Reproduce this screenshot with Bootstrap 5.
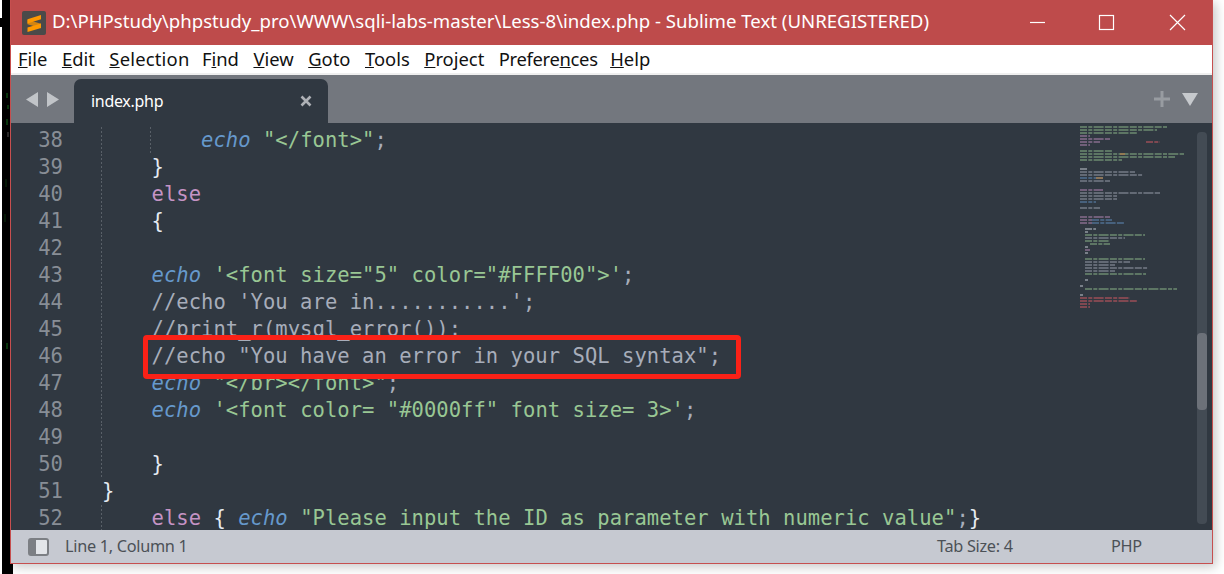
<!DOCTYPE html>
<html lang="en">
<head>
<meta charset="utf-8">
<title>Sublime Text</title>
<link href="https://cdn.jsdelivr.net/npm/bootstrap@5.3.0/dist/css/bootstrap.min.css" rel="stylesheet">
<style>
html,body{width:1224px;height:574px;overflow:hidden;background:#fff;font-family:"Noto Sans","Open Sans",sans-serif}
.desk-strip{width:8px;margin-left:2px;background:#000;height:574px;flex:none}
.desk-nub{width:10px;height:9px;margin-left:-2px;background:#000;position:relative;top:18px}
.desk-marks{display:block;margin-top:40px}
.win-col{width:1203px;flex:none}
.win{height:564px;border:1px solid #c64f4f;border-top:0;box-shadow:3px 3px 10px rgba(0,0,0,.22);position:relative;background:#303841}
.title-bar{height:45px;background:#be4b4b;color:#fff;font-size:18.63px;padding-left:11px}
.title-text{margin-top:-4px}
.app-logo{margin-right:6px;flex:none}
.win-ctl{width:72px;height:45px}
.menu-bar{height:30px;background:#fff;border-bottom:2px solid #efefef;color:#111;font-size:18.4px;padding-left:7px;line-height:28px}
.menu-bar span{margin-right:14.5px}
.menu-bar .narrow-item{letter-spacing:-.33px;margin-right:12.5px}
.menu-bar .wide-item{letter-spacing:.2px;margin-right:12.5px}
.tab-bar{height:48px;background:#73777e;padding-left:15px}
.tab-nav{width:48px;height:48px}
.file-tab{width:254px;height:44px;margin-top:4px;background:#303841;border-radius:7px 7px 0 0;color:#fff;font-size:16px;letter-spacing:-.3px;padding:0 16px 0 17px}
.tab-tools{margin-left:auto;margin-right:14px;gap:12px}
.editor{height:407px;background:#303841;overflow:hidden}
.gutter{width:89px;flex:none;padding-top:4px;padding-right:37px;text-align:right;color:#888e96;white-space:pre}
.code-font{font-family:"DejaVu Sans Mono","Liberation Mono",monospace;font-size:20.5px;letter-spacing:.04px;line-height:27px}
.code-area{width:971px;flex:none;padding-top:4px;color:#e6ebf2}
.cl{height:27px;padding-left:2px;white-space:pre}
.g1{background:linear-gradient(#596068 50%,transparent 50%) 1px 0/1px 4px repeat-y}
.g2{background:linear-gradient(#596068 50%,transparent 50%) 1px 0/1px 4px repeat-y,linear-gradient(#596068 50%,transparent 50%) 50px 0/1px 4px repeat-y}
.t-kw{color:#c594c5}
.t-ec{color:#6699cc;font-style:italic}
.t-st{color:#99c794}
.t-cm{color:#a7adba}
.t-pu{color:#a7adba}
.mini-map{width:118px;flex:none;filter:blur(.5px)}
.scroll-track{width:10px;height:392px;margin:9px 0 0 8px;background:#434b54;border-radius:4px;padding-top:201px;flex:none}
.scroll-thumb{height:77px;background:#6c7179;border-radius:4px}
.status-bar{height:33px;background:#c6c9d1;color:#4c5157;font-size:16.3px;letter-spacing:-.3px;padding-left:17px}
.st-right-tab{margin-left:auto;width:174px}
.st-right-lang{width:101px}
.red-box{position:absolute;left:132px;top:335px;width:598px;height:44px;border:5px solid #fb2117;border-radius:4px}
.under-win{width:3px;height:10px;background:#000}
</style>
</head>
<body class="d-flex m-0">
<div class="desk-strip">
  <div class="desk-nub"></div>
  <svg class="desk-marks" width="8" height="300" viewBox="0 0 8 300" aria-hidden="true"><path d="M5 44v5M6 56v4M5 70v6" stroke="#0d4a12" stroke-width="1.5"/><path d="M6 83v5" stroke="#3a3a3a" stroke-width="1.5"/><path d="M4 130v8M3 165v8" stroke="#0a300d" stroke-width="1"/><path d="M5 294v6" stroke="#0d4a12" stroke-width="1.5"/></svg>
</div>
<div class="win-col">
  <div class="win d-flex flex-column">
    <div class="title-bar d-flex align-items-center">
      <svg class="app-logo" width="24" height="24" viewBox="0 0 24 24" aria-hidden="true"><rect width="24" height="24" rx="2" fill="#4b4a49"/><path d="M19 4 5.500 8.200v4.300L19 8.300z" fill="#ff9800"/><path d="M5.500 8.800 19 12.800v4.400L5.500 13.200z" fill="#ff9800" opacity=".75"/><path d="M19 12.500v4.400L5.500 21v-4.400z" fill="#ff9800"/></svg>
      <span class="title-text">D:\PHPstudy\phpstudy_pro\WWW\sqli-labs-master\Less-8\index.php - Sublime Text (UNREGISTERED)</span>
      <div class="ms-auto d-flex">
        <svg class="win-ctl" viewBox="0 0 72 45" aria-hidden="true"><path d="M34 22.500h15" stroke="#fff" stroke-width="1.200"/></svg>
        <svg class="win-ctl" viewBox="0 0 72 45" aria-hidden="true"><rect x="31.500" y="15.500" width="14" height="14" fill="none" stroke="#fff" stroke-width="1.200"/></svg>
        <svg class="win-ctl" viewBox="0 0 72 45" aria-hidden="true"><path d="M30 15l15 15M45 15 30 30" stroke="#fff" stroke-width="1.200"/></svg>
      </div>
    </div>
    <div class="menu-bar d-flex">
      <span><u>F</u>ile</span><span><u>E</u>dit</span><span class="wide-item"><u>S</u>election</span><span>F<u>i</u>nd</span><span><u>V</u>iew</span><span><u>G</u>oto</span><span><u>T</u>ools</span><span><u>P</u>roject</span><span class="narrow-item">Prefere<u>n</u>ces</span><span><u>H</u>elp</span>
    </div>
    <div class="tab-bar d-flex align-items-start">
      <svg class="tab-nav" viewBox="0 0 48 48" aria-hidden="true"><path d="M12 17 0 24.500 12 32zM21 17l12 7.500L21 32z" fill="#c1c4c8"/></svg>
      <div class="file-tab d-flex align-items-center justify-content-between">
        <span>index.php</span>
        <svg width="12" height="12" viewBox="0 0 12 12" aria-hidden="true"><path d="M1.500 1.500l9 9M10.500 1.500l-9 9" stroke="#aeb1b6" stroke-width="2.600"/></svg>
      </div>
      <div class="tab-tools d-flex align-items-center pt-3">
        <svg width="16" height="16" viewBox="0 0 16 16" aria-hidden="true"><path d="M8 0v16M0 8h16" stroke="#989ca1" stroke-width="3"/></svg>
        <svg width="16" height="13" viewBox="0 0 16 13" aria-hidden="true"><path d="M0 0h16l-8 13z" fill="#c6c9cd"/></svg>
      </div>
    </div>
    <div class="editor d-flex">
      <div class="gutter code-font">38
39
40
41
42
43
44
45
46
47
48
49
50
51
52</div>
      <div class="code-area code-font">
<div class="cl g2">        <span class="t-ec">echo</span> <span class="t-st">"&lt;/font&gt;"</span><span class="t-pu">;</span></div>
<div class="cl g1">    }</div>
<div class="cl g1">    <span class="t-kw">else</span></div>
<div class="cl g1">    {</div>
<div class="cl g1"></div>
<div class="cl g1">    <span class="t-ec">echo</span> <span class="t-st">'&lt;font size="5" color="#FFFF00"&gt;'</span><span class="t-pu">;</span></div>
<div class="cl g1">    <span class="t-cm">//echo 'You are in...........';</span></div>
<div class="cl g1">    <span class="t-cm">//print_r(mysql_error());</span></div>
<div class="cl g1">    <span class="t-cm">//echo "You have an error in your SQL syntax";</span></div>
<div class="cl g1">    <span class="t-ec">echo</span> <span class="t-st">"&lt;/br&gt;&lt;/font&gt;"</span><span class="t-pu">;</span></div>
<div class="cl g1">    <span class="t-ec">echo</span> <span class="t-st">'&lt;font color= "#0000ff" font size= 3&gt;'</span><span class="t-pu">;</span></div>
<div class="cl g1"></div>
<div class="cl g1">    }</div>
<div class="cl">}</div>
<div class="cl g1">    <span class="t-kw">else</span> { <span class="t-ec">echo</span> <span class="t-st">"Please input the ID as parameter with numeric value"</span><span class="t-pu">;</span>}</div>
      </div>
      <svg class="mini-map" width="118" height="200" viewBox="1071 123 118 200" aria-hidden="true">
        <g fill="none" stroke-width="1.400" stroke-dasharray="7 1.300 4 1.300 10 1.300" opacity=".58">
          <path stroke="#99c794" d="M1080 127h87M1080 130h77M1080 133h58M1080 151h32M1080 154h104M1080 157h95M1080 160h42M1085 235h60M1085 241h25M1090 244h20M1085 259h60M1085 274h61M1085 289h92"/>
          <path stroke="#a7adba" d="M1080 172h55M1080 175h63M1080 181h30M1080 193h80M1080 196h37M1080 199h37M1080 208h20M1085 238h40M1085 262h45M1085 265h30M1085 268h63M1085 271h30"/>
          <path stroke="#c594c5" d="M1080 136h10M1080 139h30M1080 142h20M1080 145h10M1080 190h23M1080 217h30M1080 220h12M1080 223h12M1085 250h5"/>
          <path stroke="#6699cc" d="M1092 220h20M1092 223h33M1080 178h23M1080 202h16"/>
          <path stroke="#f9ae58" d="M1120 154h5M1096 178h7"/>
          <path stroke="#e8606a" d="M1080 298h50M1080 301h58M1080 304h10M1080 307h10M1146 142h14"/>
          <path stroke="#d8dee9" d="M1080 169h7M1085 229h11M1085 232h3M1085 247h3M1085 253h3M1085 280h3M1080 286h3M1080 295h3"/>
        </g>
      </svg>
      <div class="scroll-track"><div class="scroll-thumb"></div></div>
    </div>
    <div class="status-bar d-flex align-items-center">
      <svg width="21" height="18" viewBox="0 0 21 18" class="me-3" aria-hidden="true"><rect x="1" y="1" width="19" height="16" rx="2" fill="#e3e5e9" stroke="#7c7f84" stroke-width="2"/><path d="M2 2h6v14H2z" fill="#7c7f84"/></svg>
      <span>Line 1, Column 1</span>
      <span class="st-right-tab">Tab Size: 4</span>
      <span class="st-right-lang">PHP</span>
    </div>
    <div class="red-box"></div>
  </div>
  <div class="under-win"></div>
</div>
</body>
</html>
